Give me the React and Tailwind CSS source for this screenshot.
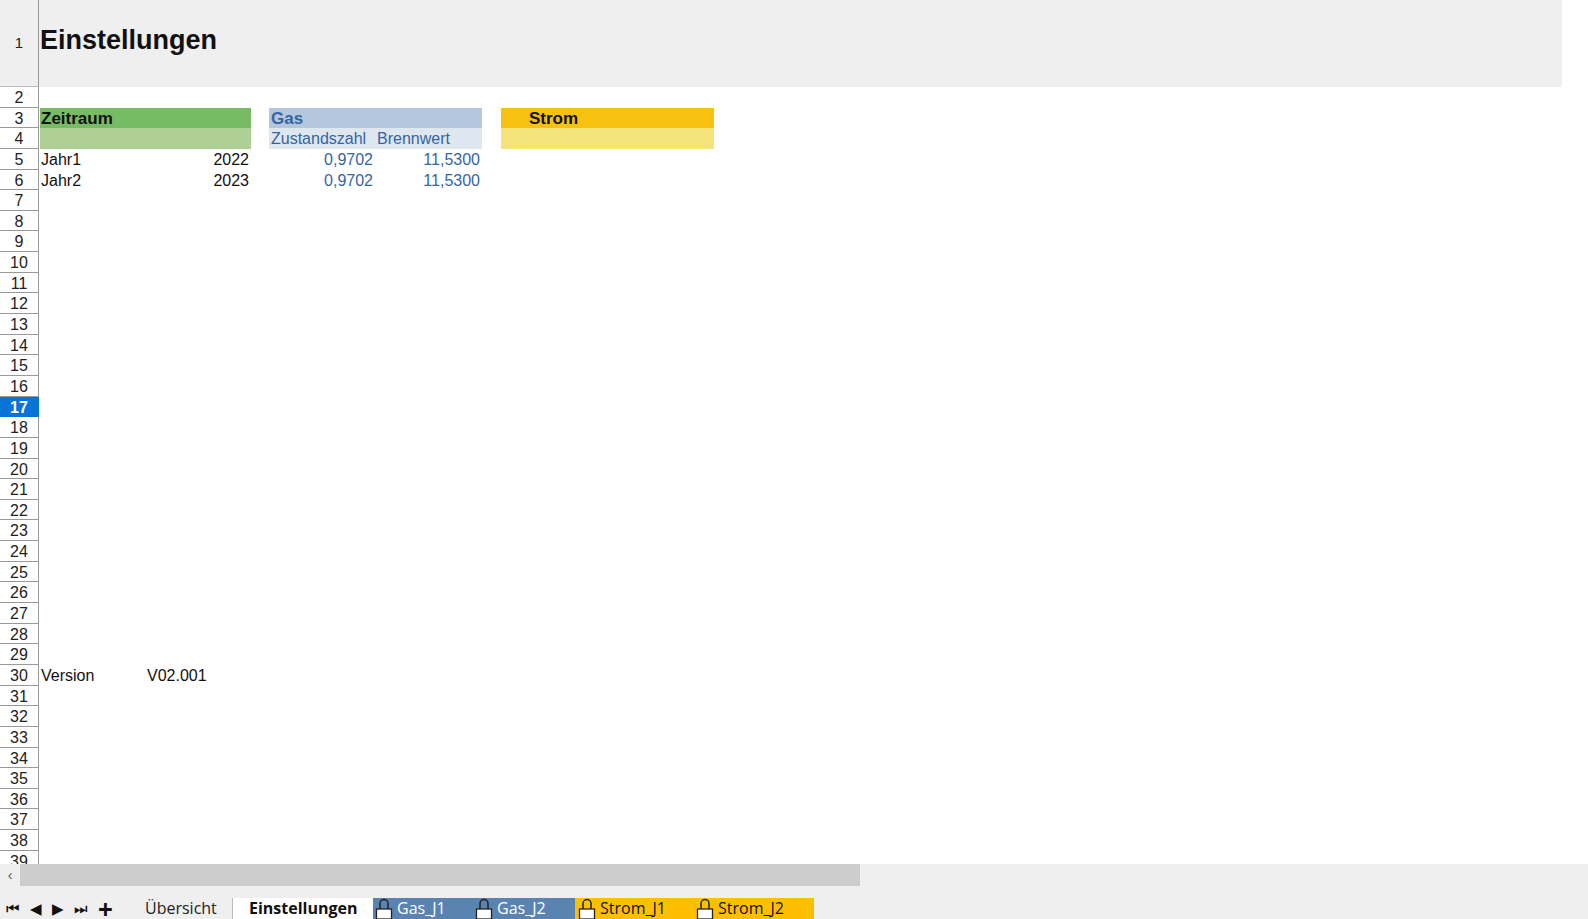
export default function App() {
  const rows = [];
  for (let i = 2; i <= 39; i++) rows.push(i);
  const font = { fontFamily: '"Liberation Sans", Arial, sans-serif' };
  const cell = (r) => {
    if (r === 3)
      return (
        <>
          <div className="w-[211px] bg-[#77bc65] font-bold text-[17px] text-[#111] pl-[1px]">Zeitraum</div>
          <div className="w-[18px]" />
          <div className="w-[213px] bg-[#b4c7dc] font-bold text-[17px] text-[#3465a4] pl-[2px]">Gas</div>
          <div className="w-[19px]" />
          <div className="w-[213px] bg-[#f6c10f] font-bold text-[17px] text-[#111] pl-[28px]">Strom</div>
        </>
      );
    if (r === 4)
      return (
        <>
          <div className="w-[211px] bg-[#afd095]" />
          <div className="w-[18px]" />
          <div className="w-[213px] bg-[#dee6ef] text-[#3465a4] flex">
            <span className="w-[107px] pl-[2px]">Zustandszahl</span>
            <span className="pl-[1px]">Brennwert</span>
          </div>
          <div className="w-[19px]" />
          <div className="w-[213px] bg-[#f4e47a]" />
        </>
      );
    if (r === 5 || r === 6)
      return (
        <>
          <div className="w-[211px] flex justify-between pr-[2px] pl-[1px] text-[#111]">
            <span>{r === 5 ? "Jahr1" : "Jahr2"}</span>
            <span>{r === 5 ? "2022" : "2023"}</span>
          </div>
          <div className="w-[18px]" />
          <div className="w-[213px] flex text-[#3465a4]">
            <span className="w-[106px] text-right pr-[2px]">0,9702</span>
            <span className="w-[107px] text-right pr-[2px]">11,5300</span>
          </div>
        </>
      );
    if (r === 30)
      return (
        <>
          <div className="w-[106px] pl-[1px] text-[#111]">Version</div>
          <div className="w-[106px] pl-[1px] text-[#111]">V02.001</div>
        </>
      );
    return null;
  };
  const Lock = () => (
    <svg width="18" height="21" viewBox="0 0 18 21" className="mr-[4px] shrink-0">
      <path d="M5 11V5.5a4 4 0 0 1 8 0V11" fill="none" stroke="#222" strokeWidth="1.5" />
      <rect x="1.5" y="11" width="15" height="10" fill="#fff" stroke="#222" strokeWidth="1.3" />
    </svg>
  );
  return (
    <div className="w-[1588px] h-[919px] overflow-hidden bg-white flex flex-col" style={font}>
      <div className="flex h-[87px] shrink-0">
        <div className="w-[39px] bg-[#efefef] border-r border-[#999] border-b border-b-[#bbb] flex items-center justify-center text-[15px] text-[#222]">1</div>
        <div className="w-[1523px] bg-[#efefef] flex items-center pl-[1px] pb-[6px] text-[27px] font-bold text-[#111]">Einstellungen</div>
      </div>
      <div className="h-[777px] shrink-0 overflow-hidden">
        {rows.map((r) => (
          <div key={r} className="flex h-[20.65px] text-[16px] leading-[21px] overflow-hidden">
            <div
              className={
                "w-[39px] shrink-0 border-r border-b text-center text-[16px] leading-[22px] " +
                (r === 17 ? "bg-[#0a74d6] text-white font-bold border-[#0a74d6]" : "bg-white text-[#222] border-[#999]")
              }
            >
              {r}
            </div>
            <div className="flex pl-[1px]">{cell(r)}</div>
          </div>
        ))}
      </div>
      <div className="flex-1 bg-[#efefef] flex flex-col">
        <div className="h-[22px] flex items-center shrink-0">
          <span className="w-[20px] text-center text-[#555] text-[14px] leading-none">‹</span>
          <div className="w-[840px] h-[22px] bg-[#cdcdcd]" />
        </div>
        <div className="flex items-end h-[33px] text-[16px] leading-[21px]" style={{ fontFamily: '"Open Sans", "Noto Sans", sans-serif' }}>
          <div className="w-[133px] flex items-center gap-[10px] pl-[6px] h-[21px] text-[#111] text-[15px]">
            <span>⏮</span><span>◀</span><span>▶</span><span>⏭</span><span className="text-[26px] font-bold leading-none">+</span>
          </div>
          <div className="w-[100px] h-[21px] flex items-center pl-[12px] text-[#222] border-r border-[#bbb]">Übersicht</div>
          <div className="w-[140px] h-[21px] flex items-center pl-[16px] bg-white font-bold text-[#111]">Einstellungen</div>
          <div className="h-[21px] flex items-end bg-[#5983b0] text-white">
            <div className="w-[101px] flex items-end pl-[2px]"><Lock />Gas_J1</div>
            <div className="w-[101px] flex items-end pl-[1px]"><Lock />Gas_J2</div>
          </div>
          <div className="h-[21px] flex items-end bg-[#ffbf00] text-[#111]">
            <div className="w-[118px] flex items-end pl-[3px]"><Lock />Strom_J1</div>
            <div className="w-[121px] flex items-end pl-[3px]"><Lock />Strom_J2</div>
          </div>
        </div>
      </div>
    </div>
  );
}
